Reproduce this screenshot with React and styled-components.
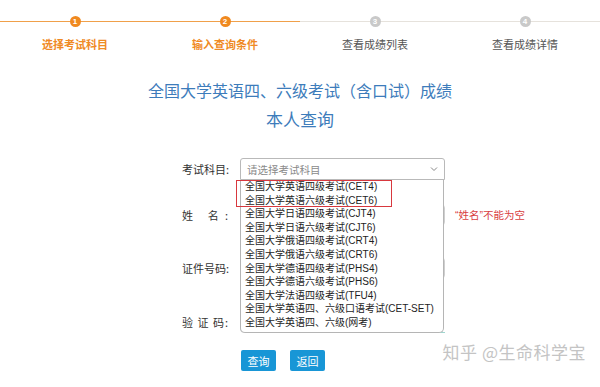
import React from "react";
import styled, { createGlobalStyle } from "styled-components";

const Global = createGlobalStyle`
  html, body { margin: 0; padding: 0; background: #fff; }
  body { font-family: "Noto Sans CJK SC", "Noto Sans", "Liberation Sans", sans-serif; }
`;

const Page = styled.div`
  position: relative;
  width: 600px;
  height: 387px;
  overflow: hidden;
  background: #fff;
`;

const Steps = styled.div`
  display: grid;
  grid-template-columns: repeat(4, 150px);
  padding-top: 16px;
`;

const Step = styled.div`
  display: flex;
  flex-direction: column;
  align-items: center;
  position: relative;
  &::before {
    content: "";
    position: absolute;
    left: 0;
    right: 0;
    top: 5px;
    height: 1px;
    background: ${(p) => (p.$active ? "#f0a04a" : "#e6e2dc")};
  }
`;

const Dot = styled.div`
  position: relative;
  width: 11px;
  height: 11px;
  border-radius: 50%;
  background: ${(p) => (p.$active ? "#f0891f" : "#c9c9c9")};
  color: #fff;
  font-size: 8px;
  line-height: 11px;
  text-align: center;
  font-family: "Liberation Sans", sans-serif;
  font-weight: bold;
`;

const StepLabel = styled.div`
  margin-top: 10px;
  font-size: 11px;
  line-height: 14px;
  color: ${(p) => (p.$active ? "#ef8a25" : "#555")};
  font-weight: ${(p) => (p.$active ? 700 : 400)};
`;

const Title = styled.h1`
  margin: 26px 0 0;
  text-align: center;
  font-size: 16px;
  line-height: 27px;
  font-weight: 400;
  color: #3d7cbb;
`;

const SubTitle = styled.div`
  text-align: center;
  font-size: 17px;
  line-height: 29px;
  color: #3d7cbb;
`;

const Form = styled.div`
  position: relative;
  margin-top: 25px;
  margin-left: 182px;
  width: 300px;
`;

const Row = styled.div`
  display: flex;
  align-items: center;
  height: 22px;
  margin-top: ${(p) => p.$mt || 0}px;
  position: relative;
`;

const Label = styled.label`
  width: 46px;
  margin-right: 12px;
  font-size: 11px;
  color: #333;
  text-align: justify;
  text-align-last: justify;
  white-space: nowrap;
`;

const Select = styled.div`
  box-sizing: border-box;
  width: 205px;
  height: 22px;
  border: 1px solid #b9b9b9;
  border-radius: 3px 3px 0 0;
  display: flex;
  align-items: center;
  justify-content: space-between;
  padding: 0 6px 0 6px;
  font-size: 10.5px;
  color: #8a8a8a;
`;

const Input = styled.div`
  box-sizing: border-box;
  width: ${(p) => p.$w || 205}px;
  height: 22px;
  border: 1px solid #cfcfcf;
  border-radius: 4px;
  background: #fff;
`;

const Captcha = styled.div`
  box-sizing: border-box;
  width: 117px;
  height: 22px;
  margin-left: 2px;
  border-bottom: 1px solid #9fd6cf;
`;

const ErrorText = styled.span`
  position: absolute;
  left: 273px;
  top: 3px;
  font-family: "Liberation Sans", "Noto Sans CJK SC", sans-serif;
  font-size: 10.5px;
  color: #d8403f;
  white-space: nowrap;
`;

const Listbox = styled.ul`
  position: absolute;
  left: 58px;
  top: 22px;
  width: 204px;
  box-sizing: border-box;
  margin: 0;
  padding: 0 0 2px;
  list-style: none;
  background: #fff;
  border: 1px solid #b5b5b5;
  border-top: none;
  border-radius: 0 0 5px 5px;
  z-index: 2;
`;

const Option = styled.li`
  font-family: "Liberation Sans", "Noto Sans CJK SC", sans-serif;
  font-size: 10px;
  line-height: 13.6px;
  padding-left: 4px;
  color: #1e1e1e;
  white-space: nowrap;
`;

const Highlight = styled.div`
  position: absolute;
  left: -5px;
  top: 0;
  width: 156px;
  height: 27px;
  box-sizing: border-box;
  border: 1.5px solid #d8383e;
`;

const Buttons = styled.div`
  display: flex;
  gap: 14px;
  margin-top: 17px;
  margin-left: 59px;
`;

const Button = styled.button`
  width: 35px;
  height: 21px;
  padding: 0;
  border: none;
  border-radius: 2px;
  background: #1896d6;
  color: #fff;
  font-size: 11px;
  font-family: inherit;
`;

const Watermark = styled.div`
  position: absolute;
  right: 14px;
  bottom: 23px;
  font-size: 17px;
  color: #c4c4c4;
  letter-spacing: 0.5px;
`;

const steps = [
  { n: 1, label: "选择考试科目", active: true },
  { n: 2, label: "输入查询条件", active: true },
  { n: 3, label: "查看成绩列表", active: false },
  { n: 4, label: "查看成绩详情", active: false },
];

const options = [
  "全国大学英语四级考试(CET4)",
  "全国大学英语六级考试(CET6)",
  "全国大学日语四级考试(CJT4)",
  "全国大学日语六级考试(CJT6)",
  "全国大学俄语四级考试(CRT4)",
  "全国大学俄语六级考试(CRT6)",
  "全国大学德语四级考试(PHS4)",
  "全国大学德语六级考试(PHS6)",
  "全国大学法语四级考试(TFU4)",
  "全国大学英语四、六级口语考试(CET-SET)",
  "全国大学英语四、六级(网考)",
];

export default function App() {
  return (
    <Page>
      <Global />
      <Steps>
        {steps.map((s) => (
          <Step key={s.n} $active={s.active}>
            <Dot $active={s.active}>{s.n}</Dot>
            <StepLabel $active={s.active}>{s.label}</StepLabel>
          </Step>
        ))}
      </Steps>
      <Title>全国大学英语四、六级考试（含口试）成绩</Title>
      <SubTitle>本人查询</SubTitle>
      <Form>
        <Row>
          <Label>考试科目:</Label>
          <Select>
            <span>请选择考试科目</span>
            <svg width="8" height="6" viewBox="0 0 8 6">
              <path d="M1 1.5 L4 4.5 L7 1.5" fill="none" stroke="#888" strokeWidth="1" />
            </svg>
          </Select>
          <Listbox>
            <Highlight />
            {options.map((o) => (
              <Option key={o}>{o}</Option>
            ))}
          </Listbox>
        </Row>
        <Row $mt={24}>
          <Label>姓 名:</Label>
          <Input />
          <ErrorText>“姓名”不能为空</ErrorText>
        </Row>
        <Row $mt={31}>
          <Label>证件号码:</Label>
          <Input />
        </Row>
        <Row $mt={32}>
          <Label>验 证 码:</Label>
          <Input $w={86} />
          <Captcha />
        </Row>
        <Buttons>
          <Button>查询</Button>
          <Button>返回</Button>
        </Buttons>
      </Form>
      <Watermark>知乎 @生命科学宝</Watermark>
    </Page>
  );
}
